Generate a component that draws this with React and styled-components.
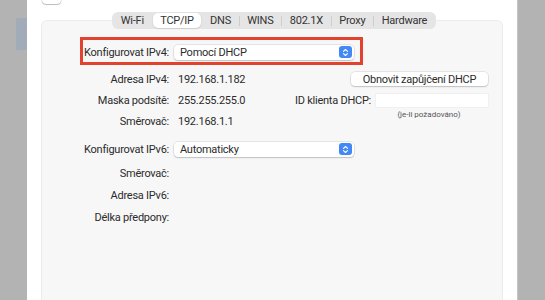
import React from "react";
import styled, { createGlobalStyle } from "styled-components";

const Global = createGlobalStyle`
  html, body { margin: 0; padding: 0; height: 300px; overflow: hidden; }
  body {
    background: #b3b3b3;
    font-family: Roboto, "Liberation Sans", sans-serif;
    letter-spacing: -0.25px;
  }
`;

const Page = styled.div`
  display: flex;
  height: 300px;
  width: 545px;
  background: #b3b3b3;
  overflow: hidden;
`;

const Gutter = styled.div`
  width: 27px;
  flex: none;
  padding-top: 18px;
  box-sizing: border-box;
`;

const SidebarItem = styled.div`
  margin-left: 16px;
  width: 11px;
  height: 32px;
  background: #a2abb8;
`;

const Window = styled.div`
  width: 491px;
  height: 300px;
  flex: none;
  background: #ffffff;
  border-right: 1px solid #c4c4c4;
  box-sizing: border-box;
  padding: 0 14px;
  display: flex;
  flex-direction: column;
`;

const TopButton = styled.div`
  width: 19px;
  height: 4px;
  margin-left: 1px;
  background: #fff;
  border-radius: 0 0 4px 4px;
  box-shadow: 0 0 0 0.5px rgba(0, 0, 0, 0.25), 0 1px 1px rgba(0, 0, 0, 0.15);
`;

const Panel = styled.div`
  margin-top: 16px;
  flex: 1;
  background: #f7f7f7;
  border: 1px solid #ececec;
  border-bottom: none;
  border-radius: 6px 6px 0 0;
  display: flex;
  flex-direction: column;
`;

const TabBar = styled.div`
  align-self: center;
  margin-top: -9px;
  margin-left: 4px;
  height: 17px;
  display: flex;
  align-items: center;
  background: #e5e5e5;
  border-radius: 6px;
  padding: 0 1px;
  position: relative;
  z-index: 1;
`;

const Tab = styled.div`
  height: 15px;
  display: flex;
  align-items: center;
  padding: 0 7.7px;
  font-size: 11px;
  color: #333333;
  border-radius: 5px;
  background: ${(p) => (p.$active ? "#ffffff" : "transparent")};
  box-shadow: ${(p) =>
    p.$active ? "0 0.5px 1.5px rgba(0,0,0,0.18)" : "none"};
`;

const Sep = styled.div`
  width: 1px;
  height: 10px;
  background: ${(p) => (p.$hidden ? "transparent" : "#cdcdcd")};
`;

const Form = styled.div`
  display: flex;
  flex-direction: column;
  padding: 12px 14px 0 0;
`;

const Row = styled.div`
  position: relative;
  display: flex;
  align-items: center;
  height: 22px;
  margin-top: ${(p) => p.$mt || 0}px;
`;

const Label = styled.div`
  width: 127px;
  flex: none;
  text-align: right;
  font-size: 11px;
  color: #2b2b2b;
  white-space: nowrap;
`;

const Value = styled.div`
  margin-left: 9px;
  font-size: 11px;
  color: #2b2b2b;
`;

const Popup = styled.div`
  margin-left: 5px;
  width: 180px;
  height: 15px;
  box-sizing: border-box;
  background: #ffffff;
  border-radius: 4px;
  box-shadow: 0 0 0 0.5px rgba(0, 0, 0, 0.14), 0 1px 1.5px rgba(0, 0, 0, 0.16);
  display: flex;
  align-items: center;
  justify-content: space-between;
  padding: 0 2px 0 6px;
  font-size: 11px;
  color: #2b2b2b;
`;

const Stepper = styled.div`
  width: 13px;
  height: 12px;
  border-radius: 3px;
  background: #4389f5;
  display: flex;
  align-items: center;
  justify-content: center;
`;

const Highlight = styled.div`
  position: absolute;
  left: 38px;
  top: -4px;
  width: 283px;
  height: 28px;
  box-sizing: border-box;
  border: 3px solid #e2432e;
  pointer-events: none;
`;

const Right = styled.div`
  margin-left: auto;
  display: flex;
  align-items: center;
  gap: 5px;
  align-self: ${(p) => (p.$top ? "flex-start" : "center")};
`;

const Button = styled.div`
  width: 137px;
  height: 14px;
  background: #ffffff;
  border-radius: 4px;
  box-shadow: 0 0 0 0.5px rgba(0, 0, 0, 0.14), 0 1px 1.5px rgba(0, 0, 0, 0.16);
  display: flex;
  align-items: center;
  justify-content: center;
  font-size: 11px;
  color: #2b2b2b;
`;

const RightLabel = styled.div`
  font-size: 11px;
  color: #2b2b2b;
`;

const Input = styled.div`
  width: 112px;
  height: 13px;
  background: #ffffff;
  box-shadow: 0 0 0 0.5px rgba(0, 0, 0, 0.06);
`;

const Hint = styled.div`
  width: 112px;
  text-align: center;
  font-size: 8px;
  letter-spacing: 0;
  line-height: 10px;
  color: #555;
  padding-right: 6px;
  box-sizing: border-box;
`;

const StepIcon = () => (
  <svg width="7" height="9" viewBox="0 0 7 9">
    <path d="M1.5 3.3 L3.5 1.5 L5.5 3.3" fill="none" stroke="#fff" strokeWidth="1.1" strokeLinecap="round" strokeLinejoin="round" />
    <path d="M1.5 5.7 L3.5 7.5 L5.5 5.7" fill="none" stroke="#fff" strokeWidth="1.1" strokeLinecap="round" strokeLinejoin="round" />
  </svg>
);

const tabs = ["Wi-Fi", "TCP/IP", "DNS", "WINS", "802.1X", "Proxy", "Hardware"];
const activeIndex = 1;

export default function App() {
  return (
    <>
      <Global />
      <Page>
        <Gutter>
          <SidebarItem />
        </Gutter>
        <Window>
          <TopButton />
          <Panel>
            <TabBar>
              {tabs.map((t, i) => (
                <React.Fragment key={t}>
                  {i > 0 && (
                    <Sep $hidden={i === activeIndex || i - 1 === activeIndex} />
                  )}
                  <Tab $active={i === activeIndex}>{t}</Tab>
                </React.Fragment>
              ))}
            </TabBar>
            <Form>
              <Row>
                <Label>Konfigurovat IPv4:</Label>
                <Popup>
                  Pomocí DHCP
                  <Stepper><StepIcon /></Stepper>
                </Popup>
                <Highlight />
              </Row>
              <Row $mt={5}>
                <Label>Adresa IPv4:</Label>
                <Value>192.168.1.182</Value>
                <Right>
                  <Button>Obnovit zapůjčení DHCP</Button>
                </Right>
              </Row>
              <Row $mt={-1}>
                <Label>Maska podsítě:</Label>
                <Value>255.255.255.0</Value>
                <Right>
                  <RightLabel>ID klienta DHCP:</RightLabel>
                  <Input />
                </Right>
              </Row>
              <Row $mt={-1}>
                <Label>Směrovač:</Label>
                <Value>192.168.1.1</Value>
                <Right $top>
                  <Hint>(je-li požadováno)</Hint>
                </Right>
              </Row>
              <Row $mt={6}>
                <Label>Konfigurovat IPv6:</Label>
                <Popup>
                  Automaticky
                  <Stepper><StepIcon /></Stepper>
                </Popup>
              </Row>
              <Row $mt={2}>
                <Label>Směrovač:</Label>
              </Row>
              <Row>
                <Label>Adresa IPv6:</Label>
              </Row>
              <Row>
                <Label>Délka předpony:</Label>
              </Row>
            </Form>
          </Panel>
        </Window>
      </Page>
    </>
  );
}
